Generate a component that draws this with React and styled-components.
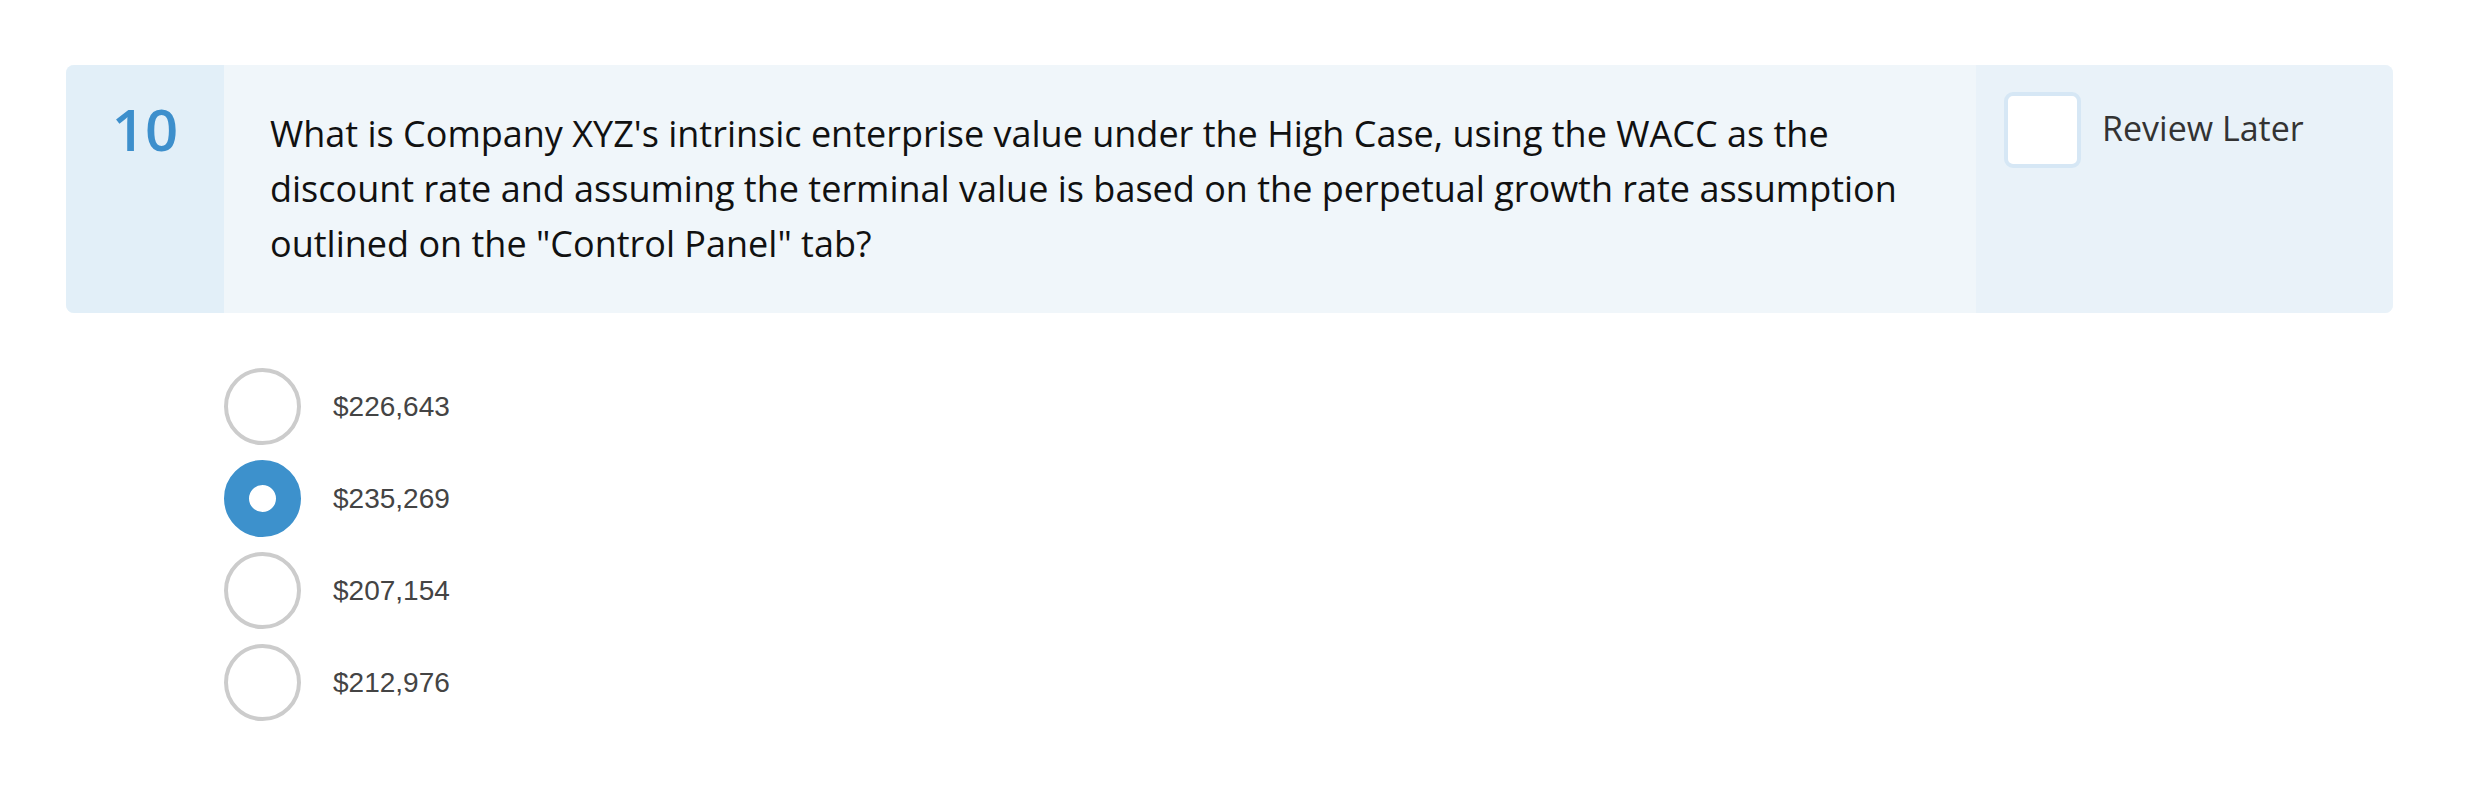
import React, { useState } from "react";
import styled, { createGlobalStyle } from "styled-components";

const GlobalStyle = createGlobalStyle`
  html, body {
    margin: 0;
    padding: 0;
    background: #ffffff;
  }
  body {
    font-family: "Open Sans", "Liberation Sans", sans-serif;
  }
`;

const answers = ["$226,643", "$235,269", "$207,154", "$212,976"];

const App = () => {
  const [selected, setSelected] = useState(1);
  const [review, setReview] = useState(false);

  return (
    <Page>
      <GlobalStyle />
      <QuestionCard>
        <NumberCol>10</NumberCol>
        <QuestionText>
          What is Company XYZ's intrinsic enterprise value under the High Case,
          using the WACC as the discount rate and assuming the terminal value is
          based on the perpetual growth rate assumption outlined on the "Control
          Panel" tab?
        </QuestionText>
        <ReviewCol>
          <ReviewLabel>
            <Checkbox
              $checked={review}
              onClick={() => setReview(!review)}
            />
            <ReviewText>Review Later</ReviewText>
          </ReviewLabel>
        </ReviewCol>
      </QuestionCard>
      <AnswerList>
        {answers.map((a, i) => (
          <AnswerRow key={a} onClick={() => setSelected(i)}>
            <Radio $checked={selected === i} />
            <AnswerText>{a}</AnswerText>
          </AnswerRow>
        ))}
      </AnswerList>
    </Page>
  );
};

const Page = styled.div`
  padding: 65px 79px 40px 66px;
`;

const QuestionCard = styled.div`
  display: flex;
  border-radius: 8px;
  overflow: hidden;
  background: #f0f6fa;
  min-height: 248px;
`;

const NumberCol = styled.div`
  width: 158px;
  flex-shrink: 0;
  background: #e2eff8;
  color: #3d8fcc;
  font-family: "Open Sans", sans-serif;
  font-weight: 600;
  font-size: 58px;
  line-height: 58px;
  text-align: center;
  padding-top: 35px;
  box-sizing: border-box;
`;

const QuestionText = styled.div`
  flex: 1;
  padding: 41px 40px 38px 46px;
  font-family: "Open Sans", sans-serif;
  font-size: 36px;
  line-height: 55px;
  color: #111;
`;

const ReviewCol = styled.div`
  width: 417px;
  flex-shrink: 0;
  background: #e9f2f9;
  padding: 27px 28px;
  box-sizing: border-box;
`;

const ReviewLabel = styled.div`
  display: flex;
  align-items: center;
  gap: 21px;
  cursor: pointer;
`;

const Checkbox = styled.div`
  width: 77px;
  height: 76px;
  box-sizing: border-box;
  border: 4px solid #d6e7f5;
  border-radius: 9px;
  background: #ffffff;
`;

const ReviewText = styled.span`
  font-family: "Open Sans", sans-serif;
  font-size: 34px;
  color: #333;
  margin-top: -5px;
`;

const AnswerList = styled.div`
  display: flex;
  flex-direction: column;
  gap: 15px;
  padding: 55px 0 0 158px;
`;

const AnswerRow = styled.div`
  display: flex;
  align-items: center;
  gap: 32px;
  cursor: pointer;
`;

const Radio = styled.div`
  width: 77px;
  height: 77px;
  box-sizing: border-box;
  border-radius: 50%;
  border: ${(p) => (p.$checked ? "25px solid #3d91cc" : "4px solid #cccccc")};
  background: #ffffff;
`;

const AnswerText = styled.span`
  font-family: "Liberation Sans", Arial, sans-serif;
  font-size: 28px;
  color: #444;
`;

export default App;
